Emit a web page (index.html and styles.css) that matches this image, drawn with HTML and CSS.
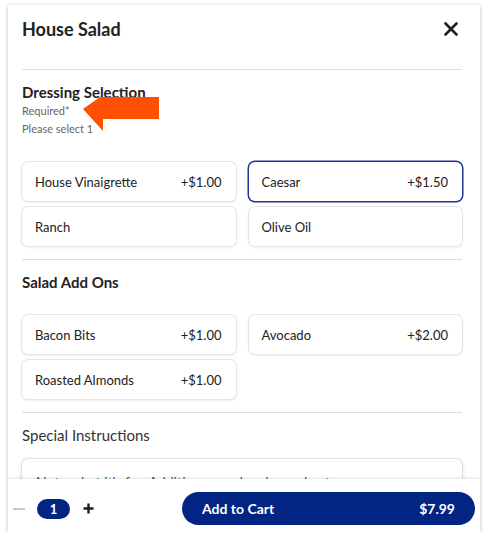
FILE: index.html
```html
<!DOCTYPE html>
<html>
<head>
<meta charset="utf-8">
<link rel="stylesheet" href="styles.css">
</head>
<body>
<div class="modal">
  <div class="scroll">
    <div class="header">
      <h1 class="title">House Salad</h1>
      <button class="close" aria-label="Close">
        <svg width="14" height="14" viewBox="0 0 14 14"><path d="M1.5 1.5 L12.5 12.5 M12.5 1.5 L1.5 12.5" stroke="#1f1f1f" stroke-width="2.6" stroke-linecap="round"/></svg>
      </button>
    </div>
    <div class="section">
      <h2 class="sec-title">Dressing Selection</h2>
      <div class="meta">Required*</div>
      <div class="meta">Please select 1</div>
      <div class="options first">
        <div class="opt"><span>House Vinaigrette</span><span>+$1.00</span></div>
        <div class="opt selected"><span>Caesar</span><span>+$1.50</span></div>
        <div class="opt"><span>Ranch</span></div>
        <div class="opt"><span>Olive Oil</span></div>
      </div>
    </div>
    <div class="section">
      <h2 class="sec-title">Salad Add Ons</h2>
      <div class="options">
        <div class="opt"><span>Bacon Bits</span><span>+$1.00</span></div>
        <div class="opt"><span>Avocado</span><span>+$2.00</span></div>
        <div class="opt"><span>Roasted Almonds</span><span>+$1.00</span></div>
      </div>
    </div>
    <div class="section last">
      <h2 class="sec-plain">Special Instructions</h2>
      <div class="textarea">Note what it's for. Additions may be charged extra.</div>
    </div>
  </div>
  <div class="footer">
    <div class="qty">
      <span class="minus"></span>
      <span class="count">1</span>
      <span class="plus"><svg width="11" height="11" viewBox="0 0 11 11"><path d="M5.5 0.5 V10.5 M0.5 5.5 H10.5" stroke="#1f1f1f" stroke-width="2.4"/></svg></span>
    </div>
    <button class="cart"><span>Add to Cart</span><span>$7.99</span></button>
  </div>
  <svg class="arrow" width="80" height="40" viewBox="80 95 80 40"><polygon points="83,109 100,97 159,97 159,119 103,119 103,131" fill="#ff4f00"/></svg>
</div>
</body>
</html>
```

FILE: styles.css
```css
* { box-sizing: border-box; }
html, body { margin: 0; padding: 0; background: #fff; }
body {
  font-family: Lato, "Open Sans", "Liberation Sans", sans-serif;
  color: #222;
  padding: 5px 8px 0 8px;
}
.modal {
  position: relative;
  width: 472px;
  height: 527px;
  background: #fff;
  box-shadow: 0 1px 4px rgba(0,0,0,0.28);
  display: flex;
  flex-direction: column;
  overflow: hidden;
}
.scroll {
  flex: 1;
  overflow: hidden;
  padding: 0 18px 0 14px;
}
.header {
  height: 65px;
  display: flex;
  justify-content: space-between;
  align-items: flex-start;
  padding-top: 14px;
  border-bottom: 1px solid #dcdcdc;
}
.title {
  margin: 0;
  font-size: 18px;
  line-height: 20px;
  font-weight: 700;
  color: #222;
}
.close {
  border: 0;
  background: none;
  padding: 0;
  margin: 3px 4px 0 0;
  width: 14px;
  height: 14px;
  display: flex;
}
.section {
  border-bottom: 1px solid #dcdcdc;
  padding: 13px 0 13px 0;
}
.section.last { border-bottom: 0; padding-bottom: 0; }
.sec-title {
  margin: 0 0 1px 0;
  font-size: 15px;
  line-height: 18px;
  font-weight: 700;
  color: #222;
}
.sec-plain {
  margin: 0;
  font-size: 15px;
  line-height: 18px;
  font-weight: 400;
  color: #333;
}
.meta {
  font-size: 11px;
  line-height: 18px;
  color: #666;
}
.options {
  display: grid;
  grid-template-columns: 1fr 1fr;
  column-gap: 13px;
  row-gap: 6px;
  margin-top: 24px;
}
.options.first { margin-top: 24px; }
.opt {
  height: 39px;
  border-radius: 6px;
  background: #fff;
  box-shadow: 0 0 0 1px #e6e6e6, 0 1px 3px rgba(0,0,0,0.14);
  display: flex;
  align-items: center;
  justify-content: space-between;
  padding: 0 14px 0 13px;
  font-size: 13px;
  color: #222;
}
.opt.selected {
  box-shadow: 0 0 0 1.5px #1e3592, 0 1px 3px rgba(0,0,0,0.1);
}
.textarea {
  margin-top: 15px;
  height: 80px;
  border-radius: 6px;
  box-shadow: 0 0 0 1px #e2e2e2, 0 1px 4px rgba(0,0,0,0.2);
  padding: 14px 14px;
  font-size: 14px;
  color: #555;
  white-space: nowrap;
  overflow: hidden;
}
.footer {
  height: 53px;
  flex: none;
  background: #fff;
  box-shadow: 0 -1px 3px rgba(0,0,0,0.12);
  position: relative;
  display: flex;
  align-items: center;
  justify-content: space-between;
  padding: 6px 5px 0 5px;
}
.qty {
  display: flex;
  align-items: center;
}
.minus {
  width: 12px;
  height: 2px;
  background: #c8c8c8;
  margin-right: 12px;
}
.count {
  width: 33px;
  height: 20px;
  border-radius: 10px;
  background: #022584;
  color: #fff;
  font-weight: 700;
  font-size: 13px;
  display: flex;
  align-items: center;
  justify-content: center;
}
.plus {
  margin-left: 13px;
  display: flex;
}
.cart {
  width: 293px;
  height: 33px;
  border: 0;
  border-radius: 17px;
  background: #022584;
  color: #fff;
  font-family: inherit;
  font-weight: 700;
  font-size: 14px;
  display: flex;
  align-items: center;
  justify-content: space-between;
  padding: 0 20px;
}
.arrow {
  position: absolute;
  left: 72px;
  top: 90px;
}
```
